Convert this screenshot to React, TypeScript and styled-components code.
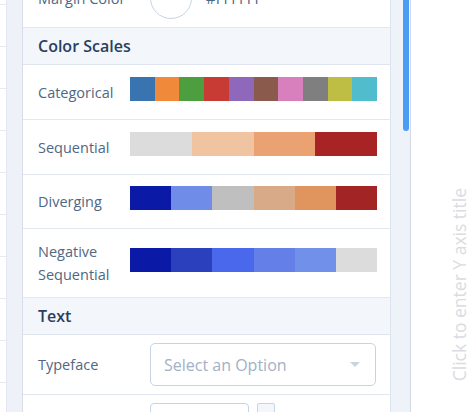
import * as React from "react";
import styled, { createGlobalStyle } from "styled-components";

const GlobalStyle = createGlobalStyle`
  html, body {
    margin: 0;
    padding: 0;
    background: #ffffff;
  }
  body {
    font-family: "Open Sans", "Liberation Sans", sans-serif;
  }
`;

const Screen = styled.div`
  width: 474px;
  height: 412px;
  overflow: hidden;
  display: flex;
  flex-flow: row nowrap;
  align-items: stretch;
  background: #ffffff;
`;

const Gutter = styled.div`
  width: 6px;
  flex: none;
  background-color: #ffffff;
  background-image: linear-gradient(
    to bottom,
    transparent 0px,
    transparent 41px,
    #e6eaf1 41px,
    #e6eaf1 42px
  );
  background-size: 6px 42px;
  background-position: 0 5px;
`;

const Panel = styled.div`
  flex: none;
  display: flex;
  flex-flow: row nowrap;
  align-items: stretch;
`;

const SideStrip = styled.div`
  width: 15px;
  flex: none;
  background: #eef1f7;
  border-left: 1px solid #e3e8f0;
  border-right: 1px solid #d8dee9;
`;

const Content = styled.div`
  width: 367px;
  flex: none;
  background: #ffffff;
  overflow: hidden;
`;

const Scroller = styled.div`
  margin-top: -31px;
  display: flex;
  flex-flow: column nowrap;
`;

const Track = styled.div`
  width: 21px;
  flex: none;
  background: #eef2f9;
  border-left: 1px solid #dfe5ee;
  border-right: 1px solid #d3dae6;
  display: flex;
  justify-content: flex-end;
  padding-right: 1px;
  box-sizing: border-box;
`;

const Thumb = styled.div`
  width: 6px;
  height: 131px;
  background: #4b9cf4;
  border-radius: 0 0 3px 3px;
`;

const SectionHeader = styled.div`
  height: 36px;
  display: flex;
  align-items: center;
  padding: 0 15px;
  background: #f3f6fa;
  border-bottom: 1px solid #dfe5ee;
  color: #2a3f5f;
  font-size: 16px;
  font-weight: 600;
`;

const Row = styled.div<{ $height: number }>`
  min-height: ${p => p.$height}px;
  display: flex;
  flex-flow: row nowrap;
  align-items: center;
  padding: 0 13px 0 15px;
  border-bottom: 1px solid #e3e8f0;
`;

const Label = styled.div<{ $width: number }>`
  width: ${p => p.$width}px;
  flex: none;
  color: #506784;
  font-size: 14.5px;
  line-height: 23px;
`;

const Swatch = styled.div`
  width: 40px;
  height: 40px;
  border-radius: 50%;
  border: 1px solid #c8d4e3;
  background: #ffffff;
  flex: none;
`;

const HexText = styled.div`
  margin-left: 14px;
  color: #506784;
  font-size: 15px;
`;

const Scale = styled.div`
  flex: 1;
  height: 24px;
  margin-bottom: 7px;
  display: flex;
  flex-flow: row nowrap;
`;

const Chip = styled.div<{ $color: string }>`
  flex: 1;
  background: ${p => p.$color};
`;

const Dropdown = styled.div`
  flex: 1;
  height: 41px;
  margin-right: 1px;
  border: 1px solid #c8d4e3;
  border-radius: 5px;
  display: flex;
  align-items: center;
  justify-content: space-between;
  padding: 0 15px 0 13px;
  color: #a2b1c6;
  font-size: 16px;
`;

const Caret = styled.div`
  width: 0;
  height: 0;
  border-left: 5px solid transparent;
  border-right: 5px solid transparent;
  border-top: 5px solid #c8d4e3;
`;

const NumberRow = styled.div`
  display: flex;
  gap: 8px;
  align-items: flex-start;
  padding-top: 8px;
  min-height: 30px;
`;

const NumberInput = styled.div`
  width: 97px;
  height: 30px;
  border: 1px solid #c8d4e3;
  border-radius: 4px;
`;

const Stepper = styled.div`
  width: 16px;
  height: 16px;
  border: 1px solid #c8d4e3;
  background: #f3f6fa;
  border-radius: 2px;
  position: relative;
  &::after {
    content: "";
    position: absolute;
    left: 7px;
    top: 8px;
    width: 2px;
    height: 8px;
    background: #8c9db5;
  }
`;

const ChartArea = styled.div`
  flex: 1;
  display: flex;
  justify-content: flex-end;
  align-items: flex-end;
  padding: 0 4px 31px 0;
`;

const AxisTitle = styled.div`
  writing-mode: vertical-rl;
  transform: rotate(180deg);
  color: #d9dce1;
  font-size: 17.5px;
  line-height: 22px;
  white-space: nowrap;
`;

const scales: { name: string[]; colors: string[]; height: number }[] = [
  {
    name: ["Categorical"],
    height: 54,
    colors: [
      "#3a74b0",
      "#f0893a",
      "#4d9e3f",
      "#c83a34",
      "#9068bb",
      "#8a5a4d",
      "#d880be",
      "#7f7f7f",
      "#bfbe44",
      "#50bccc",
    ],
  },
  {
    name: ["Sequential"],
    height: 54,
    colors: ["#dcdcdc", "#f0c4a0", "#eba272", "#a82424"],
  },
  {
    name: ["Diverging"],
    height: 53,
    colors: ["#0a1aa6", "#6f8de8", "#bfbfbf", "#d8aa88", "#e0955f", "#a32424"],
  },
  {
    name: ["Negative", "Sequential"],
    height: 68,
    colors: ["#0a1aa6", "#2a40bd", "#4a68ec", "#6480e8", "#7090ea", "#dcdcdc"],
  },
];

export default function App() {
  return (
    <Screen>
      <GlobalStyle />
      <Gutter />
      <Panel>
        <SideStrip />
        <Content>
          <Scroller>
            <Row $height={58}>
              <Label $width={112}>Margin Color</Label>
              <Swatch />
              <HexText>#FFFFFF</HexText>
            </Row>
            <SectionHeader>Color Scales</SectionHeader>
            {scales.map(s => (
              <Row key={s.name.join(" ")} $height={s.height}>
                <Label $width={92}>
                  {s.name.map(n => (
                    <div key={n}>{n}</div>
                  ))}
                </Label>
                <Scale>
                  {s.colors.map((c, i) => (
                    <Chip key={i} $color={c} />
                  ))}
                </Scale>
              </Row>
            ))}
            <SectionHeader>Text</SectionHeader>
            <Row $height={59}>
              <Label $width={112}>Typeface</Label>
              <Dropdown>
                Select an Option
                <Caret />
              </Dropdown>
            </Row>
            <Row $height={40}>
              <Label $width={112} />
              <NumberRow>
                <NumberInput />
                <Stepper />
              </NumberRow>
            </Row>
          </Scroller>
        </Content>
        <Track>
          <Thumb />
        </Track>
      </Panel>
      <ChartArea>
        <AxisTitle>Click to enter Y axis title</AxisTitle>
      </ChartArea>
    </Screen>
  );
}
